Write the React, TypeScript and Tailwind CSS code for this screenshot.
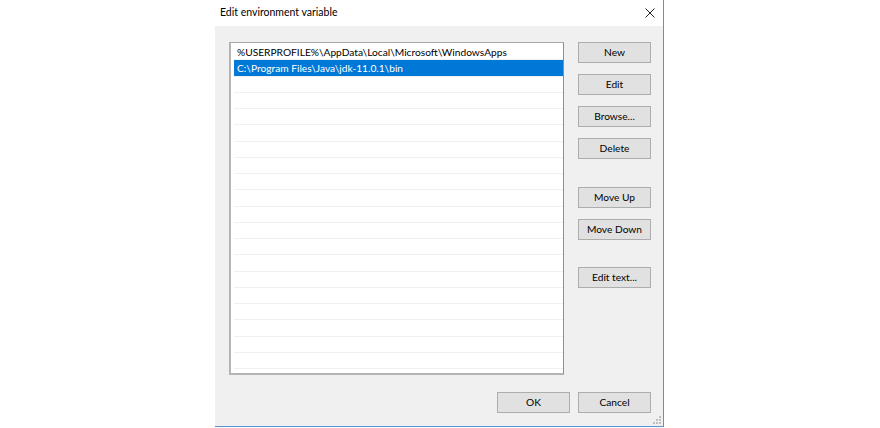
const entries = [
  '%USERPROFILE%\\AppData\\Local\\Microsoft\\WindowsApps',
  'C:\\Program Files\\Java\\jdk-11.0.1\\bin',
];

const ROW_COUNT = 20;

function DialogButton({ label, className = '' }: { label: string; className?: string }) {
  return (
    <button
      className={`flex h-[21px] w-[73px] items-center justify-center border border-[#adadad] bg-[#e1e1e1] text-[10.2px] leading-none text-black ${className}`}
    >
      {label}
    </button>
  );
}

function SizeGrip() {
  return (
    <svg width="9" height="9" viewBox="0 0 9 9" className="shrink-0">
      {[
        [7, 1],
        [7, 4],
        [4, 4],
        [7, 7],
        [4, 7],
        [1, 7],
      ].map(([x, y]) => (
        <rect key={`${x}-${y}`} x={x} y={y} width="2" height="2" fill="#bfbfbf" />
      ))}
    </svg>
  );
}

export default function App() {
  const rows = Array.from({ length: ROW_COUNT }, (_, i) => entries[i] ?? '');

  return (
    <div
      className="flex h-[428px] w-[880px] bg-white pl-[215px]"
      style={{ fontFamily: 'Lato, "Segoe UI", "Noto Sans", sans-serif' }}
    >
      <div className="flex h-[427px] w-[449px] flex-col border-r border-b border-[#5b93d3]">
        {/* title bar */}
        <div className="flex h-[26px] shrink-0 items-center justify-between bg-white pl-[5px] pr-[8px]">
          <span className="text-[10.5px] text-black">Edit environment variable</span>
          <svg width="10" height="10" viewBox="0 0 10 10">
            <path d="M0.5 0.5 L9.5 9.5 M9.5 0.5 L0.5 9.5" stroke="#222" strokeWidth="1" />
          </svg>
        </div>

        {/* body */}
        <div className="flex flex-1 flex-col bg-[#f0f0f0] pl-[14px] pr-[12px] pt-[16px]">
          <div className="flex gap-[14px]">
            <div className="h-[333px] w-[335px] overflow-hidden border border-l-2 border-b-2 border-[#b4b4b4] border-t-[#a8a8a8] border-r-[#8f8f8f] bg-white pl-[3px] pt-px">
              {rows.map((text, i) => (
                <div
                  key={i}
                  className={`flex h-[16.25px] items-center border-b border-[#f0f0f0] pl-[3px] pt-px text-[10.2px] leading-none whitespace-nowrap ${
                    i === 1 ? 'border-[#0078d7] bg-[#0078d7] text-white' : 'text-black'
                  }`}
                >
                  {text}
                </div>
              ))}
            </div>

            <div className="flex flex-col">
              <DialogButton label="New" />
              <DialogButton label="Edit" className="mt-[11px]" />
              <DialogButton label="Browse..." className="mt-[11px]" />
              <DialogButton label="Delete" className="mt-[11px]" />
              <DialogButton label="Move Up" className="mt-[28px]" />
              <DialogButton label="Move Down" className="mt-[11px]" />
              <DialogButton label="Edit text..." className="mt-[27px]" />
            </div>
          </div>

          <div className="mt-[17px] flex justify-end gap-[8px]">
            <DialogButton label="OK" className="h-[20px]" />
            <DialogButton label="Cancel" className="h-[20px]" />
          </div>

          <div className="mr-[-10px] mt-[2px] flex justify-end">
            <SizeGrip />
          </div>
        </div>
      </div>
    </div>
  );
}
